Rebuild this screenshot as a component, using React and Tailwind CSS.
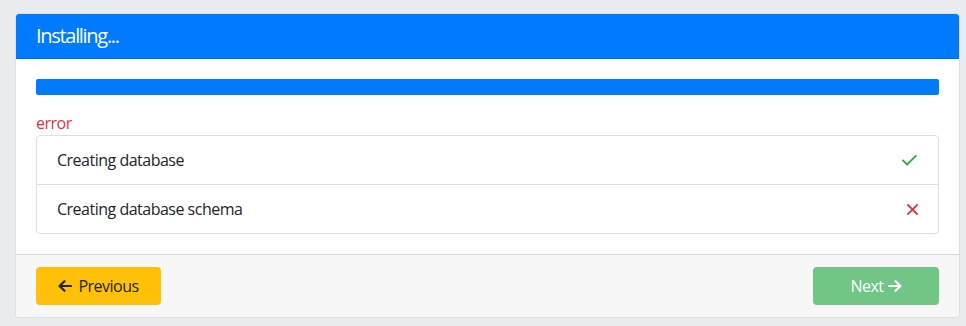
import React from "react";

const font = { fontFamily: '"Open Sans", "Noto Sans", sans-serif' };

function ArrowLeft() {
  return (
    <svg width="14" height="12" viewBox="0 0 14 12" fill="none" stroke="currentColor" strokeWidth="2.2" strokeLinecap="round" strokeLinejoin="round">
      <path d="M13 6H2" />
      <path d="M6.5 1.2L1.5 6l5 4.8" />
    </svg>
  );
}

function ArrowRight() {
  return (
    <svg width="14" height="12" viewBox="0 0 14 12" fill="none" stroke="currentColor" strokeWidth="2.2" strokeLinecap="round" strokeLinejoin="round">
      <path d="M1 6h11" />
      <path d="M7.5 1.2L12.5 6l-5 4.8" />
    </svg>
  );
}

function Check() {
  return (
    <svg width="15" height="11" viewBox="0 0 15 11" fill="none" stroke="#28a745" strokeWidth="1.8" strokeLinecap="square">
      <path d="M1.2 5.6l3.9 3.9L13.8 1" />
    </svg>
  );
}

function Cross() {
  return (
    <svg width="11" height="11" viewBox="0 0 11 11" fill="none" stroke="#dc3545" strokeWidth="1.8" strokeLinecap="square">
      <path d="M1 1l9 9M10 1l-9 9" />
    </svg>
  );
}

export default function App() {
  return (
    <div className="h-[326px] w-[966px] bg-[#e9ecef] pt-[13px] pl-[15px] text-[#212529] tracking-[-0.5px]" style={font}>
      <div className="w-[945px] rounded-[4px] border border-black/[0.125] bg-white overflow-hidden">
        <div className="bg-[#007bff] px-5 py-[10px] text-[20px] leading-[24px] tracking-[-1.3px] text-white border-b border-black/[0.125]">
          Installing...
        </div>
        <div className="p-5">
          <div className="h-4 bg-[#007bff] rounded-[2px]" />
          <div className="mt-4 text-[16px] leading-[24px] text-[#dc3545]">error</div>
          <div className="rounded-[4px] border border-black/[0.125]">
            <div className="flex items-center justify-between px-5 py-3 text-[16px] leading-[24px] border-b border-black/[0.125]">
              <span>Creating database</span>
              <span className="flex w-[20px] justify-end pr-[1px]"><Check /></span>
            </div>
            <div className="flex items-center justify-between px-5 py-3 text-[16px] leading-[24px]">
              <span>Creating database schema</span>
              <span className="flex w-[20px] justify-end"><Cross /></span>
            </div>
          </div>
        </div>
        <div className="flex items-center justify-between border-t border-black/[0.125] bg-[#f7f7f7] px-5 py-3">
          <button className="flex h-[38px] w-[125px] items-center justify-center gap-[6px] rounded-[4px] bg-[#ffc107] text-[16px] leading-[24px] text-[#212529]">
            <ArrowLeft />
            <span>Previous</span>
          </button>
          <button className="flex h-[38px] w-[126px] items-center justify-center gap-[4px] rounded-[4px] bg-[#71c585] text-[16px] leading-[24px] text-white">
            <span>Next</span>
            <ArrowRight />
          </button>
        </div>
      </div>
    </div>
  );
}
